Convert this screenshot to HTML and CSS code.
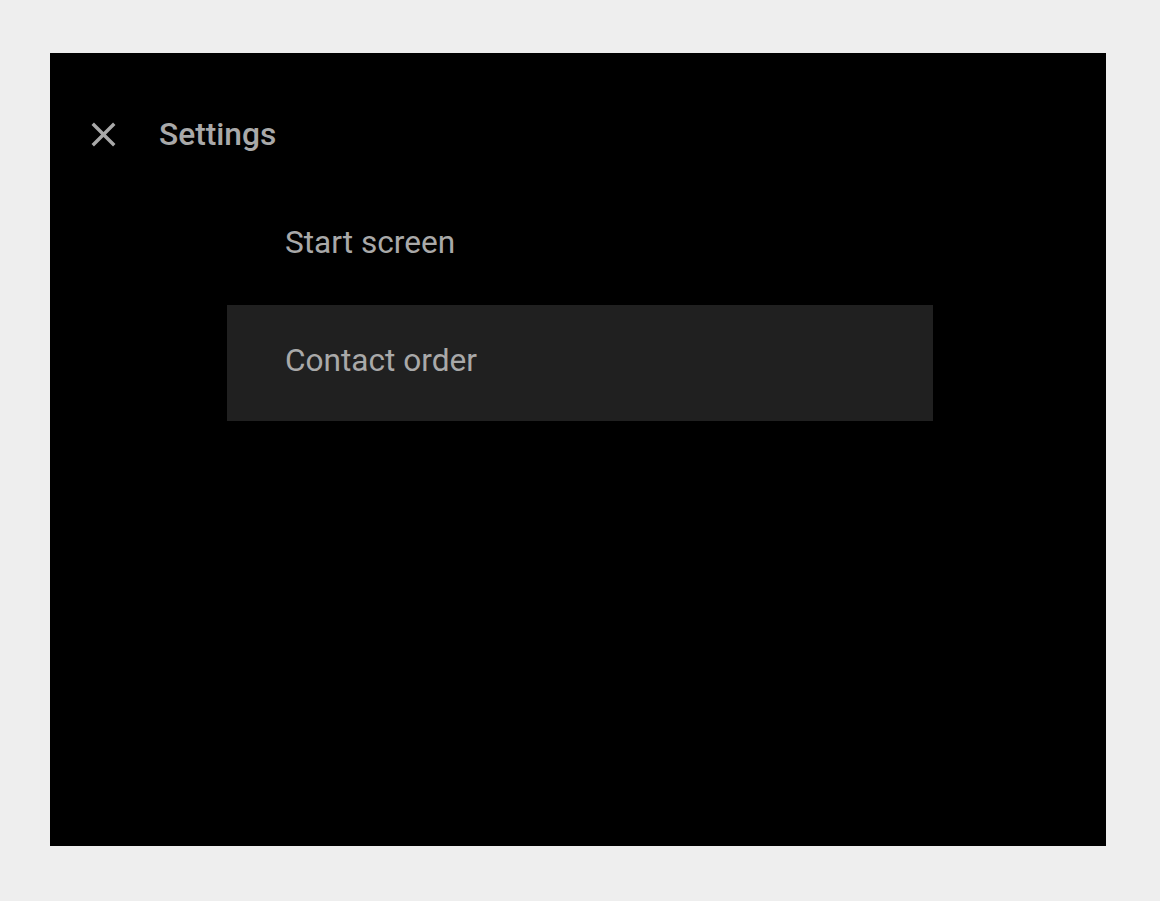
FILE: index.html
```html
<!DOCTYPE html>
<html lang="en">
<head>
<meta charset="utf-8">
<title>Settings</title>
<link rel="stylesheet" href="styles.css">
</head>
<body>
<div class="panel">
  <header class="header">
    <button class="close" aria-label="Close">
      <svg viewBox="0 0 24 24" width="41" height="41"><path d="M19 6.41 17.59 5 12 10.59 6.41 5 5 6.41 10.59 12 5 17.59 6.41 19 12 13.41 17.59 19 19 17.59 13.41 12z" fill="#a9a9a9"/></svg>
    </button>
    <h1 class="title">Settings</h1>
  </header>
  <ul class="list">
    <li class="item item-first">Start screen</li>
    <li class="item item-active">Contact order</li>
  </ul>
</div>
</body>
</html>
```
FILE: styles.css
```css
html, body {
  margin: 0;
  padding: 0;
  background: #eeeeee;
}
body {
  padding: 53px 54px 55px 50px;
  font-family: Roboto, "Noto Sans", sans-serif;
}
.panel {
  width: 1056px;
  height: 793px;
  background: #000;
  box-sizing: border-box;
  padding-top: 64px;
}
.header {
  display: flex;
  align-items: center;
  height: 36px;
}
.close {
  margin-left: 33px;
  margin-top: -1px;
  width: 41px;
  height: 41px;
  padding: 0;
  border: 0;
  background: none;
  display: flex;
}
.title {
  margin: 0 0 0 35px;
  font-size: 31.7px;
  font-weight: 500;
  line-height: 36px;
  color: #a9a9a9;
}
.list {
  list-style: none;
  margin: 36px 0 0 177px;
  padding: 0;
  width: 706px;
}
.item {
  height: 116px;
  box-sizing: border-box;
  padding: 36px 0 0 58px;
  font-size: 31.6px;
  line-height: 36px;
  color: #a9a9a9;
}
.item-active {
  background: #202020;
  padding-top: 38px;
}
```
